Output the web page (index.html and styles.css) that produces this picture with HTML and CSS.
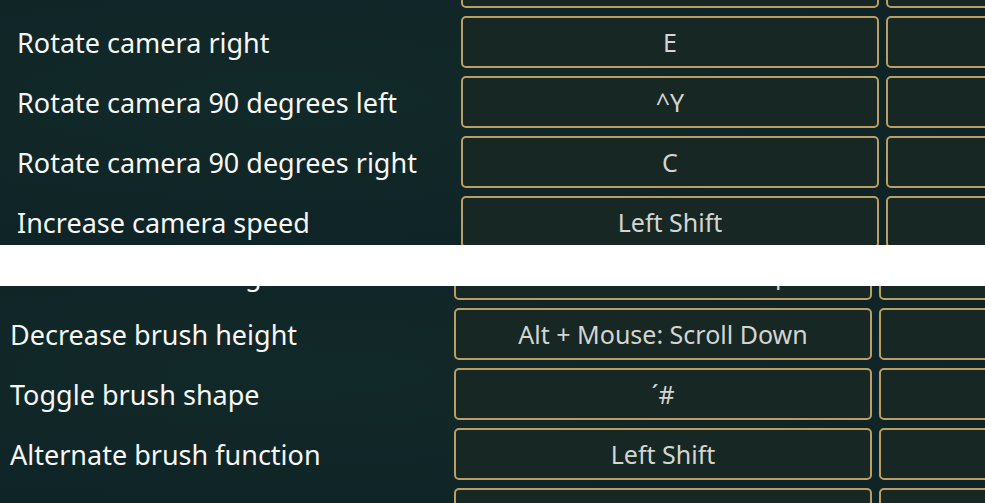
FILE: index.html
```html
<!DOCTYPE html>
<html lang="en">
<head>
<meta charset="utf-8">
<title>Controls</title>
<link rel="stylesheet" href="styles.css">
</head>
<body>
<div class="panel panel-top">
  <div class="list">
    <div class="row"><div class="label"></div><div class="key"></div><div class="key"></div></div>
    <div class="row"><div class="label">Rotate camera right</div><div class="key">E</div><div class="key"></div></div>
    <div class="row"><div class="label">Rotate camera 90 degrees left</div><div class="key">^Y</div><div class="key"></div></div>
    <div class="row"><div class="label">Rotate camera 90 degrees right</div><div class="key">C</div><div class="key"></div></div>
    <div class="row"><div class="label">Increase camera speed</div><div class="key">Left Shift</div><div class="key"></div></div>
  </div>
</div>
<div class="divider"></div>
<div class="panel panel-bottom">
  <div class="list">
    <div class="row"><div class="label">Increase brush height</div><div class="key">Alt + Mouse: Scroll Up</div><div class="key"></div></div>
    <div class="row"><div class="label">Decrease brush height</div><div class="key">Alt + Mouse: Scroll Down</div><div class="key"></div></div>
    <div class="row"><div class="label">Toggle brush shape</div><div class="key">´#</div><div class="key"></div></div>
    <div class="row"><div class="label">Alternate brush function</div><div class="key">Left Shift</div><div class="key"></div></div>
    <div class="row"><div class="label"></div><div class="key"></div><div class="key"></div></div>
  </div>
</div>
</body>
</html>
```
FILE: styles.css
```css
html, body {
  margin: 0;
  padding: 0;
  width: 985px;
  height: 503px;
  overflow: hidden;
  background: #ffffff;
  font-family: "Noto Sans", "Open Sans", sans-serif;
}

.panel {
  overflow: hidden;
  background-color: #0f2426;
  background-image: radial-gradient(ellipse at 30% 40%, rgba(28, 58, 52, 0.22), rgba(0, 0, 0, 0) 70%);
}

.panel-top {
  height: 245px;
  padding-left: 17px;
}

.panel-top .list {
  margin-top: -44px;
}

.panel-bottom {
  height: 217px;
  padding-left: 10px;
}

.panel-bottom .list {
  margin-top: -38px;
}

.divider {
  height: 41px;
  background: #ffffff;
}

.list {
  display: flex;
  flex-direction: column;
  gap: 8px;
}

.row {
  display: grid;
  grid-template-columns: 437px 418px 418px;
  column-gap: 7px;
  align-items: center;
  height: 52px;
}

.label {
  font-size: 27px;
  color: #f6f6f4;
  white-space: nowrap;
}

.key {
  box-sizing: border-box;
  height: 52px;
  border: 2px solid #bb9e63;
  border-radius: 5px;
  background: #172723;
  display: flex;
  align-items: center;
  justify-content: center;
  font-size: 25px;
  color: #d3d5d2;
  white-space: nowrap;
}
```
